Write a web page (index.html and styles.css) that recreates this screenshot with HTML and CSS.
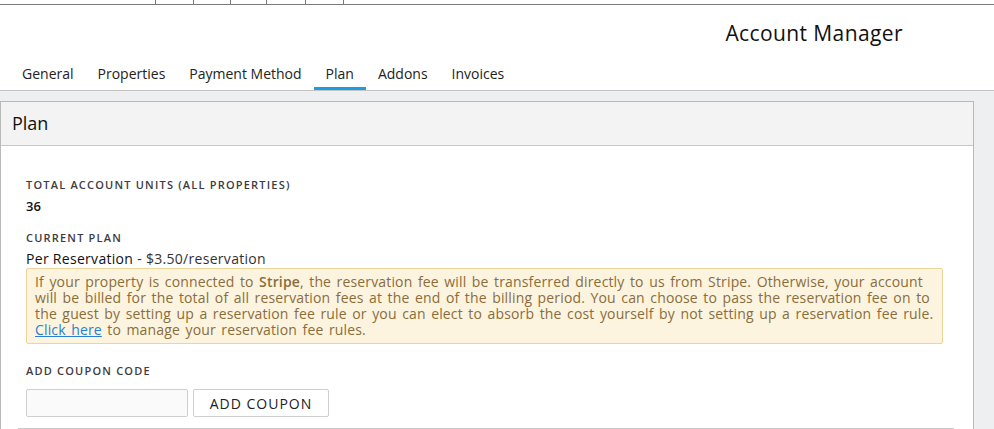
FILE: index.html
```html
<!DOCTYPE html>
<html lang="en">
<head>
<meta charset="utf-8">
<title>Account Manager</title>
<link rel="stylesheet" href="styles.css">
</head>
<body>
<div class="topbar">
  <div class="topbar-spacer"></div>
  <div class="topbar-cell"></div>
  <div class="topbar-cell"></div>
  <div class="topbar-cell"></div>
  <div class="topbar-cell"></div>
  <div class="topbar-cell topbar-cell-last"></div>
</div>
<header class="page-header">
  <h1 class="page-title">Account Manager</h1>
</header>
<nav class="tabs">
  <a class="tab">General</a>
  <a class="tab">Properties</a>
  <a class="tab">Payment Method</a>
  <a class="tab tab-active">Plan</a>
  <a class="tab">Addons</a>
  <a class="tab">Invoices</a>
</nav>
<main class="main">
  <section class="panel">
    <div class="panel-header">Plan</div>
    <div class="panel-body">
      <div class="field field-units">
        <div class="field-label">Total Account Units (All Properties)</div>
        <div class="field-value strong">36</div>
      </div>
      <div class="field field-plan">
        <div class="field-label">Current Plan</div>
        <div class="field-value plan-value"><span class="plan-name">Per Reservation</span> - $3.50/reservation</div>
        <div class="alert">If your property is connected to <b>Stripe</b>, the reservation fee will be transferred directly to us from Stripe. Otherwise, your account<br>will be billed for the total of all reservation fees at the end of the billing period. You can choose to pass the reservation fee on to<br>the guest by setting up a reservation fee rule or you can elect to absorb the cost yourself by not setting up a reservation fee rule.<br><a class="link" href="#">Click here</a> to manage your reservation fee rules.</div>
      </div>
      <div class="field field-coupon">
        <div class="field-label">Add Coupon Code</div>
        <div class="coupon-row">
          <input class="coupon-input" type="text">
          <button class="btn" type="button">ADD COUPON</button>
        </div>
      </div>
      <div class="divider"></div>
    </div>
  </section>
</main>
</body>
</html>
```

FILE: styles.css
```css
* { box-sizing: border-box; }
html, body { margin: 0; padding: 0; }
body {
  font-family: "Open Sans", "Liberation Sans", sans-serif;
  color: #222;
  background: #fff;
  width: 994px;
  height: 429px;
  overflow: hidden;
}
.topbar {
  display: flex;
  height: 5px;
  border-bottom: 1px solid #7a7a7a;
}
.topbar-spacer { width: 155px; }
.topbar-cell {
  width: 38px;
  border-left: 1px solid #7a7a7a;
}
.topbar-cell:nth-child(3) { width: 37px; }
.topbar-cell:nth-child(4) { width: 36px; }
.topbar-cell:nth-child(5) { width: 39px; }
.topbar-cell-last { border-right: 1px solid #7a7a7a; width: 39px; }

.page-header {
  display: flex;
  justify-content: flex-end;
  padding: 14px 91px 0 0;
  height: 54px;
}
.page-title {
  margin: 0;
  font-size: 21px;
  font-weight: 500;
  line-height: 28px;
  letter-spacing: 0.4px;
  color: #111;
}
.tabs {
  display: flex;
  padding: 0 0 0 10px;
  border-bottom: 1px solid #c4c4c4;
}
.tab {
  display: block;
  padding: 5px 12px 3px;
  font-size: 14px;
  line-height: 20px;
  color: #222;
  border-bottom: 3px solid transparent;
}
.tab-active { border-bottom-color: #1a9ee2; }

.main {
  background: #eeeff1;
  padding: 10px 20px 0 0;
  height: 343px;
}
.panel {
  background: #fff;
  border: 1px solid #b9b9b9;
  border-bottom: 0;
  height: 100%;
}
.panel-header {
  background: #f3f3f3;
  border-bottom: 1px solid #c8c8c8;
  height: 44px;
  padding: 0 11px;
  font-size: 18px;
  line-height: 43px;
  color: #111;
}
.panel-body {
  padding: 32px 30px 0 25px;
}
.field-units { margin-bottom: 15px; }
.field-plan { margin-bottom: 20px; }
.field-label {
  font-size: 11px;
  line-height: 14px;
  font-weight: 600;
  letter-spacing: 1.2px;
  text-transform: uppercase;
  color: #3c3c44;
}
.field-value {
  font-size: 14px;
  line-height: 20px;
  margin-top: 4px;
  color: #333;
}
.plan-value {
  line-height: 18px;
  margin-top: 5px;
  letter-spacing: 0.3px;
}
.strong { font-weight: 600; font-size: 13px; color: #111; }
.plan-name { font-weight: 500; color: #111; }
.alert {
  background: #fcf4df;
  border: 1px solid #ecd598;
  border-radius: 2px;
  padding: 5px 4px 5px 8px;
  font-size: 14px;
  line-height: 16px;
  letter-spacing: 0.15px;
  word-spacing: 1.7px;
  white-space: nowrap;
  color: #8a6d3b;
}
.alert b { font-weight: 600; }
.link { color: #2a7fd4; text-decoration: underline; }
.coupon-row {
  display: flex;
  gap: 5px;
  margin-top: 11px;
}
.coupon-input {
  width: 162px;
  height: 28px;
  border: 1px solid #cfcfcf;
  border-radius: 2px;
  background: #fafafa;
  margin: 0;
}
.btn {
  width: 136px;
  height: 28px;
  border: 1px solid #cfcfcf;
  border-radius: 2px;
  background: #fff;
  font-family: inherit;
  font-size: 14px;
  letter-spacing: 1px;
  color: #222;
  margin: 0;
}
.divider {
  border-top: 1px solid #c8c8c8;
  margin: 11px -11px 0 -8px;
}
```
